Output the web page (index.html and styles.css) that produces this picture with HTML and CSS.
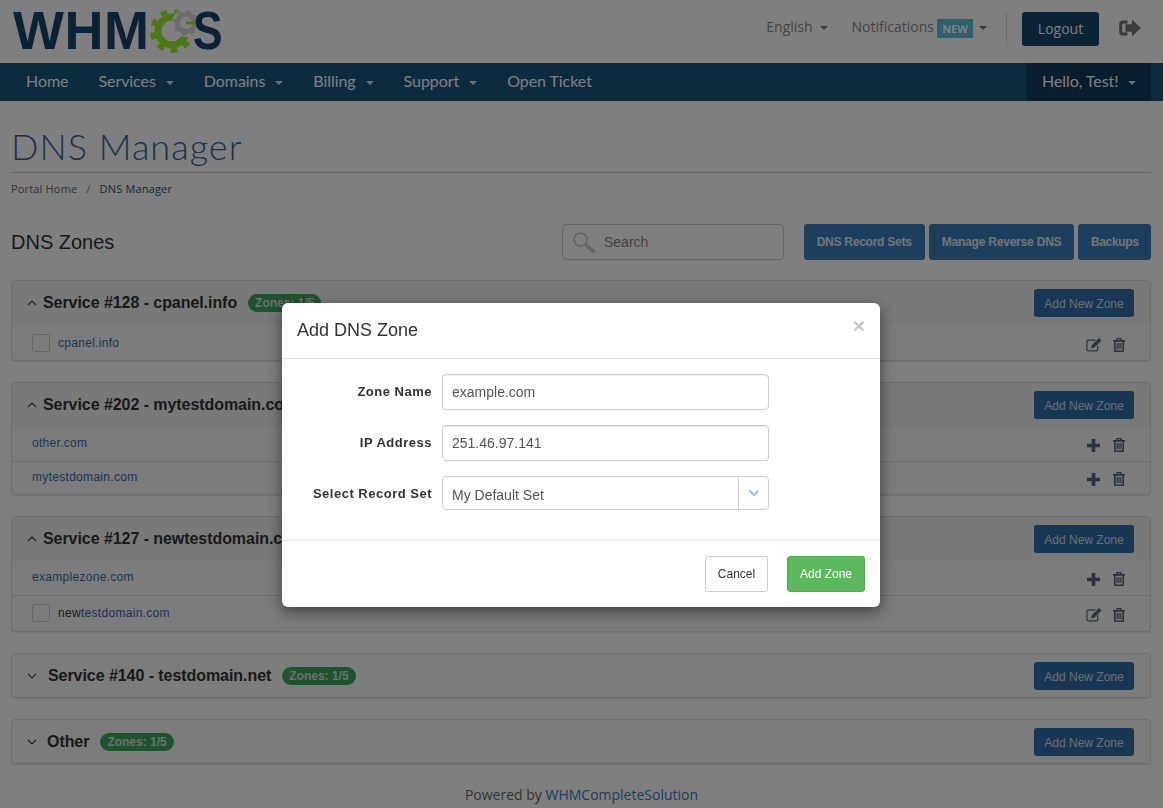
FILE: index.html
```html
<!DOCTYPE html>
<html lang="en">
<head>
<meta charset="utf-8">
<title>DNS Manager</title>
<link rel="stylesheet" href="styles.css">
</head>
<body>
<svg class="defs" width="0" height="0" aria-hidden="true">
  <symbol id="i-trash" viewBox="0 0 12 14"><path fill="currentColor" fill-rule="evenodd" d="M3.800 0h4.400l1 2H12v1.700h-1V13a1 1 0 0 1-1 1H2a1 1 0 0 1-1-1V3.700H0V2h2.800zM4.500 2h3l-.4-.8H4.900zM2.600 3.700v8.700h6.800V3.700zM3.500 5h1.200v6.300H3.500zM5.400 5h1.200v6.300H5.400zM7.300 5h1.200v6.300H7.300z"/></symbol>
  <symbol id="i-edit" viewBox="0 0 16 14"><path fill="currentColor" d="M2.500 1.500H10L8.800 2.700H2.500a1 1 0 0 0-1 1v7.600a1 1 0 0 0 1 1h7.600a1 1 0 0 0 1-1V8l1.200-1.200v4.700a2 2 0 0 1-2 2H2.300a2 2 0 0 1-2-2V3.500a2 2 0 0 1 2-2z"/><path fill="currentColor" d="M13 0l2.500 2.500-7 7L5 10.500l1-3.500z"/></symbol>
  <symbol id="i-plus" viewBox="0 0 13 13"><path fill="currentColor" d="M4.700 0h3.600v4.700H13v3.600H8.300V13H4.700V8.300H0V4.700h4.700z"/></symbol>
  <symbol id="i-up" viewBox="0 0 10 6"><path fill="none" stroke="currentColor" stroke-width="1.200" d="M1 5l4-4 4 4"/></symbol>
  <symbol id="i-down" viewBox="0 0 10 6"><path fill="none" stroke="currentColor" stroke-width="1.200" d="M1 1l4 4 4-4"/></symbol>
</svg>

<header class="topbar">
  <a class="logo" href="#">WHM<svg class="gears" width="52" height="50" viewBox="0 0 52 50" aria-hidden="true">
      <circle cx="24" cy="27" r="19" fill="none" stroke="#98ee2c" stroke-width="6" stroke-dasharray="6.500 6.800" stroke-dashoffset="2"/>
      <circle cx="24" cy="27" r="14" fill="none" stroke="#98ee2c" stroke-width="7"/>
      <circle cx="38" cy="19" r="14" fill="#fff"/>
      <circle cx="38" cy="19" r="11" fill="none" stroke="#d8d8d8" stroke-width="4" stroke-dasharray="4 4.640"/>
      <circle cx="38" cy="19" r="8.500" fill="none" stroke="#d8d8d8" stroke-width="5"/>
      <path d="M38 17.500h9v3h-9z" fill="#98ee2c"/>
    </svg><span class="logo-s">S</span></a>
  <div class="top-actions">
    <a class="top-link lang" href="#">English<i class="caret"></i></a>
    <a class="top-link notif" href="#">Notifications<span class="new">NEW</span><i class="caret"></i></a>
    <span class="divider"></span>
    <a class="logout" href="#">Logout</a>
    <a class="exit" href="#" aria-label="Sign out"><svg width="22" height="18" viewBox="0 0 22 18"><path fill="currentColor" d="M8.500 1.500v3H4.200a1 1 0 0 0-1 1v7a1 1 0 0 0 1 1h4.300v3H3.800A3.600 3.600 0 0 1 .2 12.900V5.100A3.600 3.600 0 0 1 3.800 1.500z"/><path fill="currentColor" d="M13 .5l8.800 8.500-8.800 8.500v-4.800H6.500V5.300H13z"/></svg></a>
  </div>
</header>

<nav class="mainnav">
  <a href="#">Home</a>
  <a href="#">Services<i class="caret"></i></a>
  <a href="#">Domains<i class="caret"></i></a>
  <a href="#">Billing<i class="caret"></i></a>
  <a href="#">Support<i class="caret"></i></a>
  <a href="#">Open Ticket</a>
  <a class="hello" href="#">Hello, Test!<i class="caret"></i></a>
</nav>

<main class="page">
  <h1 class="page-title">DNS Manager</h1>
  <div class="crumbs"><a href="#">Portal Home</a><span class="sep">/</span><span class="current">DNS Manager</span></div>

  <div class="toolbar">
    <h2>DNS Zones</h2>
    <label class="search">
      <svg width="30" height="30" viewBox="0 0 30 30" aria-hidden="true"><circle cx="11" cy="11" r="7.500" fill="none" stroke="#ccc" stroke-width="2"/><path d="M17 17l9 8" stroke="#ccc" stroke-width="4" stroke-linecap="round"/></svg>
      <span>Search</span>
    </label>
    <div class="tool-btns">
      <a class="btn" href="#">DNS Record Sets</a>
      <a class="btn btn-wide" href="#">Manage Reverse DNS</a>
      <a class="btn btn-narrow" href="#">Backups</a>
    </div>
  </div>

  <section class="zone">
    <div class="zone-head">
      <svg class="chev"><use href="#i-up"/></svg><span class="zone-title">Service #128 - cpanel.info</span><span class="pill">Zones: 1/5</span>
      <a class="btn-add" href="#">Add New Zone</a>
    </div>
    <div class="row row-check">
      <span class="check"></span><a href="#">cpanel.info</a>
      <span class="row-icons"><svg class="ic-edit"><use href="#i-edit"/></svg><svg class="ic-trash"><use href="#i-trash"/></svg></span>
    </div>
  </section>

  <section class="zone">
    <div class="zone-head">
      <svg class="chev"><use href="#i-up"/></svg><span class="zone-title">Service #202 - mytestdomain.com</span><span class="pill">Zones: 2/5</span>
      <a class="btn-add" href="#">Add New Zone</a>
    </div>
    <div class="row">
      <a href="#">other.com</a>
      <span class="row-icons"><svg class="ic-plus"><use href="#i-plus"/></svg><svg class="ic-trash"><use href="#i-trash"/></svg></span>
    </div>
    <div class="row row-line row-short">
      <a href="#">mytestdomain.com</a>
      <span class="row-icons"><svg class="ic-plus"><use href="#i-plus"/></svg><svg class="ic-trash"><use href="#i-trash"/></svg></span>
    </div>
  </section>

  <section class="zone">
    <div class="zone-head">
      <svg class="chev"><use href="#i-up"/></svg><span class="zone-title">Service #127 - newtestdomain.com</span><span class="pill">Zones: 2/5</span>
      <a class="btn-add" href="#">Add New Zone</a>
    </div>
    <div class="row">
      <a href="#">examplezone.com</a>
      <span class="row-icons"><svg class="ic-plus"><use href="#i-plus"/></svg><svg class="ic-trash"><use href="#i-trash"/></svg></span>
    </div>
    <div class="row row-line row-tall">
      <span class="check"></span><a href="#"><span class="dark">new</span>testdomain.com</a>
      <span class="row-icons"><svg class="ic-edit"><use href="#i-edit"/></svg><svg class="ic-trash"><use href="#i-trash"/></svg></span>
    </div>
  </section>

  <section class="zone zone-closed">
    <div class="zone-head">
      <svg class="chev chev-wide"><use href="#i-down"/></svg><span class="zone-title">Service #140 - testdomain.net</span><span class="pill">Zones: 1/5</span>
      <a class="btn-add" href="#">Add New Zone</a>
    </div>
  </section>

  <section class="zone zone-closed">
    <div class="zone-head">
      <svg class="chev chev-mid"><use href="#i-down"/></svg><span class="zone-title">Other</span><span class="pill">Zones: 1/5</span>
      <a class="btn-add" href="#">Add New Zone</a>
    </div>
  </section>
</main>

<footer class="foot">Powered by <a href="#">WHMCompleteSolution</a></footer>

<div class="backdrop"></div>

<div class="modal" role="dialog" aria-label="Add DNS Zone">
  <div class="modal-head"><h3>Add DNS Zone</h3><span class="close">×</span></div>
  <form class="modal-body">
    <div class="field"><label>Zone Name</label><span class="input">example.com</span></div>
    <div class="field"><label>IP Address</label><span class="input">251.46.97.141</span></div>
    <div class="field field-select"><label>Select Record Set</label>
      <span class="select"><span class="select-val">My Default Set</span><span class="select-arrow"><svg width="12" height="8" viewBox="0 0 12 8"><path d="M1.500 1.500L6 6l4.500-4.500" fill="none" stroke="#a3c4e2" stroke-width="2.400"/></svg></span></span>
    </div>
  </form>
  <div class="modal-foot">
    <a class="btn-cancel" href="#">Cancel</a>
    <a class="btn-ok" href="#">Add Zone</a>
  </div>
</div>
</body>
</html>
```

FILE: styles.css
```css
* { box-sizing: border-box; }
html, body { margin: 0; padding: 0; height: 808px; overflow: hidden; }
body { background: #fff; color: #333; font-family: "Liberation Sans", Arial, sans-serif; font-size: 12px; }
a { text-decoration: none; color: inherit; }
.defs { position: absolute; }

.caret { display: inline-block; width: 0; height: 0; margin-left: 10px; vertical-align: middle; border-top: 4px solid currentColor; border-left: 4px solid transparent; border-right: 4px solid transparent; }

.topbar { height: 63px; display: flex; justify-content: space-between; padding: 0 12px 0 13px; }
.logo { display: flex; height: 63px; align-items: flex-start; font-family: "Liberation Sans", sans-serif; font-weight: 700; font-size: 54px; line-height: 60px; letter-spacing: .5px; color: #14446a; }
.gears { margin: 4px 0 0 -1px; flex: none; }
.logo-s { margin-left: -7px; transform: scaleX(.82); transform-origin: left center; }

.top-actions { display: flex; align-items: flex-start; font-family: "Open Sans", sans-serif; font-size: 14px; color: #777; }
.top-link { margin-top: 17px; line-height: 20px; white-space: nowrap; color: #8a8a8a; }
.lang { margin-right: 24px; }
.lang .caret { margin-left: 7px; color: #777; }
.notif .caret { margin-left: 6px; color: #777; }
.new { display: inline-block; margin-left: 3px; width: 36px; text-align: center; height: 19px; line-height: 19px; font-size: 11px; font-weight: 700; background: #5bc0de; color: #fff; vertical-align: -1px; }
.divider { width: 1px; height: 34px; margin: 12px 15px 0 19px; background: #ddd; }
.logout { width: 77px; height: 34px; margin-top: 12px; border-radius: 3px; background: #14466b; color: #fff; line-height: 34px; text-align: center; }
.exit { margin: 19px 0 0 20px; width: 32px; color: #777; }

.mainnav { height: 38px; background: #1a567f; color: #fff; display: flex; padding: 0 12px 0 11px; font-family: "Lato", sans-serif; font-size: 16px; line-height: 36px; }
.mainnav a { padding: 0 15px; white-space: nowrap; letter-spacing: -.06px; }
.mainnav .hello { margin-left: auto; background: #103a5a; width: 124px; }
.mainnav .caret { color: #ddd; }

.page { padding: 0 12px 0 11px; }
.page-title { margin: 0; height: 72px; padding-top: 26px; border-bottom: 1px solid #ccc; font-family: "Lato", sans-serif; font-weight: 300; font-size: 36px; line-height: 38px; color: #2a6a9e; letter-spacing: 1.05px; }
.crumbs { margin-top: 9px; height: 14px; font-family: "Open Sans", sans-serif; font-size: 11px; line-height: 14px; letter-spacing: .17px; color: #666; }
.crumbs .sep { margin: 0 9px; color: #888; }
.crumbs .current { color: #2d4f6d; }

.toolbar { display: flex; align-items: center; height: 36px; margin-top: 28px; margin-bottom: 20px; }
.toolbar h2 { margin: 0; font-weight: 400; font-size: 20px; color: #333; width: 551px; }
.search { width: 222px; height: 36px; border: 1px solid #ccc; border-radius: 4px; display: flex; align-items: center; color: #888; font-size: 14px; gap: 7px; padding: 0 0 0 8px; }
.search svg { width: 26px; height: 26px; flex: none; margin-top: 2px; }
.tool-btns { margin-left: auto; display: flex; gap: 4px; }
.btn { height: 36px; line-height: 36px; padding: 0 13px; background: #3b7dbb; color: #e8e8e8; font-size: 12px; font-weight: 700; border-radius: 3px; white-space: nowrap; letter-spacing: -.25px; }
.btn-wide { letter-spacing: -.2px; }
.btn-narrow { padding: 0 12.500px; letter-spacing: -.35px; }

.zone { border: 1px solid #ddd; border-radius: 4px; margin-bottom: 21px; box-shadow: 0 1px 1px rgba(0,0,0,.1); overflow: hidden; background: #f9f9f9; }
.zone-head { height: 44px; background: #f2f2f2; display: flex; align-items: center; padding: 0 16px 0 15px; }
.zone-closed .zone-head { height: 43px; background: #f8f8f8; }
.chev { width: 10px; height: 6px; color: #444; flex: none; margin-right: 6px; }
.chev-wide { margin-right: 11px; }
.chev-mid { margin-right: 10px; }
.zone-title { font-weight: 700; font-size: 16px; letter-spacing: -.06px; color: #333; white-space: nowrap; }
.pill { margin-left: 11px; height: 18px; line-height: 18px; padding: 0 7px; border-radius: 9px; background: #3ca95a; color: #ddd; font-weight: 700; font-size: 12px; white-space: nowrap; }
.btn-add { margin-left: auto; width: 100px; height: 28px; line-height: 30px; text-align: center; background: #2f6fa8; color: #ddd; border-radius: 3px; font-size: 12px; }

.row { height: 34px; display: flex; align-items: center; padding: 0 16px 2px 20px; color: #2f6fa8; font-size: 12px; letter-spacing: .3px; }
.row-line { border-top: 1px solid #ddd; }
.row-short { height: 33px; }
.row-check { height: 35px; padding-bottom: 0; }
.row-tall { height: 36px; }
.check { width: 18px; height: 18px; border: 1px solid #ccc; border-radius: 2px; margin-right: 8px; flex: none; }
.dark { color: #333; }
.row-icons { margin-left: auto; margin-top: 4px; display: flex; align-items: center; color: #55667a; }
.row-icons svg { display: block; }
.ic-edit { width: 16px; height: 14px; margin-right: 11px; }
.ic-plus { width: 13px; height: 13px; margin-right: 13px; }
.ic-trash { width: 12px; height: 14px; margin-right: 9px; }

.foot { position: absolute; left: 0; right: 0; top: 786px; text-align: center; font-family: "Open Sans", sans-serif; font-size: 14px; line-height: 18px; color: #666; }
.foot a { color: #2f7fb8; }

.backdrop { position: fixed; inset: 0; background: rgba(0,0,0,.5); }

.modal { position: fixed; left: 282px; top: 303px; width: 598px; height: 304px; background: #fff; border-radius: 6px; box-shadow: 0 5px 15px rgba(0,0,0,.5); }
.modal-head { height: 56px; border-bottom: 1px solid #e5e5e5; padding: 0 15px; display: flex; align-items: center; justify-content: space-between; }
.modal-head h3 { margin: 0; font-weight: 400; font-size: 18px; color: #333; }
.close { font-size: 21px; font-weight: 700; color: #c6c6c6; line-height: 1; margin-top: -10px; }
.modal-body { height: 182px; border-bottom: 1px solid #e5e5e5; padding-top: 15px; }
.field { display: flex; align-items: center; margin-bottom: 15px; }
.field label { width: 150px; text-align: right; font-weight: 700; font-size: 13px; letter-spacing: .5px; color: #333; margin-right: 10px; margin-bottom: 2px; white-space: nowrap; }
.field-select label { margin-bottom: 0; }
.input { width: 327px; height: 36px; border: 1px solid #ccc; border-radius: 4px; padding: 0 9px; line-height: 34px; font-size: 14px; color: #555; box-shadow: inset 0 1px 1px rgba(0,0,0,.075); }
.select { width: 327px; height: 34px; border: 1px solid #ccc; border-radius: 4px; display: flex; font-size: 14px; color: #555; }
.select-val { flex: 1; padding: 1px 9px 0; line-height: 34px; }
.select-arrow { width: 30px; border-left: 1px solid #ccc; display: flex; align-items: center; justify-content: center; }
.modal-foot { height: 65px; display: flex; justify-content: flex-end; align-items: flex-start; padding: 15px 15px 0 0; }
.btn-cancel, .btn-ok { height: 36px; line-height: 34px; border-radius: 3px; text-align: center; font-size: 12px; border: 1px solid #ccc; }
.btn-cancel { width: 63px; color: #333; margin-right: 19px; }
.btn-ok { width: 78px; background: #5cb85c; border-color: #4cae4c; color: #fff; font-weight: 400; }
```
